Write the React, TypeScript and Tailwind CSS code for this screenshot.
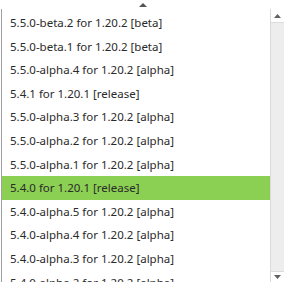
const versions = [
  "5.5.0-beta.2 for 1.20.2 [beta]",
  "5.5.0-beta.1 for 1.20.2 [beta]",
  "5.5.0-alpha.4 for 1.20.2 [alpha]",
  "5.4.1 for 1.20.1 [release]",
  "5.5.0-alpha.3 for 1.20.2 [alpha]",
  "5.5.0-alpha.2 for 1.20.2 [alpha]",
  "5.5.0-alpha.1 for 1.20.2 [alpha]",
  "5.4.0 for 1.20.1 [release]",
  "5.4.0-alpha.5 for 1.20.2 [alpha]",
  "5.4.0-alpha.4 for 1.20.2 [alpha]",
  "5.4.0-alpha.3 for 1.20.2 [alpha]",
  "5.4.0-alpha.2 for 1.20.2 [alpha]",
];

export default function App() {
  return (
    <div className="w-[284px] h-[282px] bg-white flex flex-col overflow-hidden font-['Noto_Sans',sans-serif]">
      {/* scroll-up hint */}
      <div className="h-[9px] flex justify-center items-start pt-[3px] pl-[2px]">
        <svg width="8" height="4" viewBox="0 0 8 4">
          <path d="M0 4 L4 0 L8 4 Z" fill="#555" />
        </svg>
      </div>

      <div className="flex-1 flex min-h-0 border-l border-[#a0a0a0] ml-px">
        {/* list */}
        <div className="flex-1 flex flex-col overflow-hidden pt-[2px]">
          {versions.map((v, i) => (
            <div
              key={v}
              className={`h-[23.6px] shrink-0 flex items-center pl-[8px] text-[11.5px] leading-none text-[#2a2a2a] ${
                i === 7 ? "bg-[#8bd053]" : ""
              }`}
            >
              {v}
            </div>
          ))}
        </div>

        {/* scrollbar */}
        <div className="w-[14px] flex flex-col border-l border-[#dadada]">
          <div className="h-[13px] flex items-center justify-center bg-white">
            <svg width="7" height="4" viewBox="0 0 7 4">
              <path d="M0 4 L3.5 0 L7 4 Z" fill="#606060" />
            </svg>
          </div>
          <div className="flex-1 bg-[#ededed] border-y border-[#dcdcdc]" />
          <div className="h-[10px] flex items-center justify-center bg-white">
            <svg width="7" height="4" viewBox="0 0 7 4">
              <path d="M0 0 L3.5 4 L7 0 Z" fill="#606060" />
            </svg>
          </div>
        </div>
      </div>
    </div>
  );
}
